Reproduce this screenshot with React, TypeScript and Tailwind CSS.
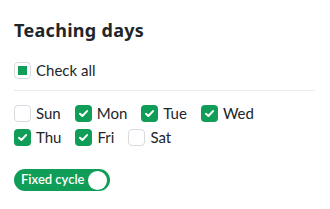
import React, { useState } from "react";

const DAYS = ["Sun", "Mon", "Tue", "Wed", "Thu", "Fri", "Sat"];

function Box({ checked, partial }: { checked: boolean; partial?: boolean }) {
    if (partial) {
        return (
            <span className="w-[17px] h-[17px] rounded border border-[#d6dbe0] bg-white flex items-center justify-center shrink-0">
                <span className="w-[9px] h-[9px] bg-[#0f9d58]" />
            </span>
        );
    }
    if (checked) {
        return (
            <span className="w-[17px] h-[17px] rounded bg-[#0f9d58] flex items-center justify-center shrink-0">
                <svg width="11" height="11" viewBox="0 0 10 10" fill="none">
                    <path d="M1.8 5.2 L4 7.3 L8.2 2.8" stroke="white" strokeWidth="1.8" strokeLinecap="round" strokeLinejoin="round" />
                </svg>
            </span>
        );
    }
    return <span className="w-[17px] h-[17px] rounded border border-[#d6dbe0] bg-white shrink-0" />;
}

export default function App() {
    const [days, setDays] = useState<Record<string, boolean>>({
        Sun: false, Mon: true, Tue: true, Wed: true, Thu: true, Fri: true, Sat: false,
    });
    const [fixed, setFixed] = useState(true);

    return (
        <div className="w-[330px] h-[209px] bg-white px-[14px] pt-[18px] text-[#212529]" style={{ fontFamily: "Lato, 'Noto Sans', sans-serif" }}>
            <div className="text-[18px] font-bold leading-[24px] tracking-[0.3px]" style={{ fontFamily: "'Noto Sans', sans-serif" }}>Teaching days</div>
            <button className="mt-[19px] flex items-center gap-[5px] text-[15px] leading-[18px]" onClick={() => {}}>
                <Box checked={false} partial />
                Check all
            </button>
            <div className="mt-[11px] h-px bg-[#e9ecef] w-[301px]" />
            <div className="mt-[14px] flex flex-wrap gap-x-[14px] gap-y-[7px] w-[260px]">
                {DAYS.map((d) => (
                    <button key={d} className="flex items-center gap-[5px] text-[15px] leading-[17px]" onClick={() => setDays({ ...days, [d]: !days[d] })}>
                        <Box checked={days[d]} />
                        {d}
                    </button>
                ))}
            </div>
            <button
                className="mt-[23px] h-[22px] w-[96px] rounded-full bg-[#0f9d58] flex items-center justify-between pl-[7px] pr-[3px]"
                onClick={() => setFixed(!fixed)}
            >
                <span className="text-white text-[13px] font-semibold">Fixed cycle</span>
                <span className="w-[19px] h-[19px] rounded-full bg-white" />
            </button>
        </div>
    );
}
